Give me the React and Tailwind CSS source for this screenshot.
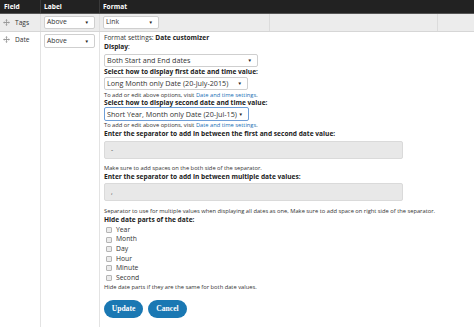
import React from "react";

const font = { fontFamily: '"Open Sans", "Liberation Sans", sans-serif' };

function Handle() {
  return (
    <svg width="7" height="7" viewBox="0 0 14 14" className="shrink-0">
      <path d="M7 0 L9.5 3 L7.8 3 L7.8 6.2 L11 6.2 L11 4.5 L14 7 L11 9.5 L11 7.8 L7.8 7.8 L7.8 11 L9.5 11 L7 14 L4.5 11 L6.2 11 L6.2 7.8 L3 7.8 L3 9.5 L0 7 L3 4.5 L3 6.2 L6.2 6.2 L6.2 3 L4.5 3 Z" fill="#9a9a9a" />
    </svg>
  );
}

function Select({ text, w, h = 13, focus = false, size = "text-[7.2px]" }) {
  return (
    <div
      className={`flex items-center justify-between bg-white rounded-[2px] pl-[2px] pr-[5px] ${size} text-[#333] shrink-0 ${focus ? "border border-[#6f9fd8]" : "border border-[#cfcfcf]"}`}
      style={{ width: w, height: h }}
    >
      <span className="whitespace-nowrap">{text}</span>
      <span className="text-[4.5px] text-[#222]">▼</span>
    </div>
  );
}

function Help({ children, h = 10, mt = 0 }) {
  return (
    <div className="text-[5.75px] text-[#333] whitespace-nowrap flex items-center" style={{ height: h, marginTop: mt }}>
      <span>{children}</span>
    </div>
  );
}

function Bold({ children, h = 8, mt = 0 }) {
  return (
    <div className="text-[6.6px] font-bold text-[#222] whitespace-nowrap flex items-center" style={{ height: h, marginTop: mt }}>
      <span>{children}</span>
    </div>
  );
}

function Check({ label }) {
  return (
    <div className="flex items-center h-[9.6px] pl-[2px]">
      <span className="w-[6px] h-[6px] rounded-[1px] border border-[#b5b5b5] bg-[#ececec] mr-[4px]"></span>
      <span className="text-[6.8px] text-[#333]">{label}</span>
    </div>
  );
}

export default function App() {
  return (
    <div className="w-[474px] h-[327px] bg-white overflow-hidden" style={font}>
      {/* header */}
      <div className="flex h-[14px] bg-[#222] border-b border-[#555] text-white text-[6.6px] font-bold">
        <div className="w-[41px] pl-[4px] flex items-center border-r border-[#3a3a3a]">Field</div>
        <div className="w-[59px] pl-[3px] flex items-center border-r border-[#3a3a3a]">Label</div>
        <div className="flex-1 pl-[3px] flex items-center">Format</div>
      </div>
      {/* tags row */}
      <div className="flex h-[18px] bg-[#ececec] border-b border-[#d6d6d6]">
        <div className="w-[41px] pl-[3px] flex items-center gap-[5px] border-r border-[#e0e0e0]">
          <Handle />
          <span className="text-[6.6px] text-[#333]">Tags</span>
        </div>
        <div className="w-[59px] pl-[3px] flex items-center border-r border-[#e0e0e0]">
          <Select text="Above" w={51} size="text-[6.8px]" />
        </div>
        <div className="w-[170px] pl-[3px] flex items-center border-r border-[#dcdcdc]">
          <Select text="Link" w={56} size="text-[6.8px]" />
        </div>
        <div className="w-[168px] border-r border-[#dcdcdc]"></div>
        <div className="flex-1"></div>
      </div>
      {/* date row */}
      <div className="flex h-[295px]">
        <div className="w-[41px] pl-[3px] pt-[4px] flex items-start gap-[5px] border-r border-[#e3e3e3]">
          <Handle />
          <span className="text-[6.6px] text-[#333] leading-[7px]">Date</span>
        </div>
        <div className="w-[59px] pl-[3px] pt-[2px] border-r border-[#e3e3e3]">
          <Select text="Above" w={51} h={14} size="text-[6.8px]" />
        </div>
        <div className="flex-1 pl-[4px] flex flex-col">
          <div className="h-[8px] mt-[2px] flex items-center text-[6.6px] text-[#333] whitespace-nowrap">
            <span>Format settings: <b className="text-[#222]">Date customizer</b></span>
          </div>
          <div className="h-[9px] flex items-center text-[6.6px] text-[#222] font-bold">
            <span>Display<span className="font-normal">:</span></span>
          </div>
          <div className="mt-[3px]"><Select text="Both Start and End dates" w={154} /></div>
          <Bold h={10}>Select how to display first date and time value:</Bold>
          <Select text="Long Month only Date (20-July-2015)" w={144} />
          <Help h={8} mt={1}>To add or edit above options, visit <span className="text-[#1a6fb5]">Date and time settings</span>.</Help>
          <Bold h={8}>Select how to display second date and time value:</Bold>
          <Select text="Short Year, Month only Date (20-Jul-15)" w={145} h={14} focus />
          <Help h={9}>To add or edit above options, visit <span className="text-[#1a6fb5]">Date and time settings</span>.</Help>
          <Bold h={8}>Enter the separator to add in between the first and second date value:</Bold>
          <div className="mt-[3px] w-[299px] h-[18px] bg-[#e8e8e8] border border-[#dadada] rounded-[2px] flex items-center pl-[6px] text-[6.6px] text-[#555]">-</div>
          <Help h={10} mt={4}>Make sure to add spaces on the both side of the separator.</Help>
          <Bold h={8}>Enter the separator to add in between multiple date values:</Bold>
          <div className="mt-[2px] w-[299px] h-[18px] bg-[#e8e8e8] border border-[#dadada] rounded-[2px] flex items-center pl-[6px] text-[6.6px] text-[#555]">,</div>
          <Help h={9} mt={6}>Separator to use for multiple values when displaying all dates as one, Make sure to add space on right side of the separator.</Help>
          <Bold h={8}>Hide date parts of the date:</Bold>
          <div className="mt-[1.2px] flex flex-col">
            <Check label="Year" />
            <Check label="Month" />
            <Check label="Day" />
            <Check label="Hour" />
            <Check label="Minute" />
            <Check label="Second" />
          </div>
          <Help h={10}>Hide date parts if they are the same for both date values.</Help>
          <div className="mt-[7px] flex gap-[5px]" style={{ fontFamily: '"Liberation Serif", "DejaVu Serif", serif' }}>
            <div className="w-[39px] h-[18px] rounded-full bg-[#1a78b3] text-white text-[7.6px] font-bold flex items-center justify-center">Update</div>
            <div className="w-[39px] h-[18px] rounded-full bg-[#1a78b3] text-white text-[7.6px] font-bold flex items-center justify-center">Cancel</div>
          </div>
        </div>
      </div>
    </div>
  );
}
